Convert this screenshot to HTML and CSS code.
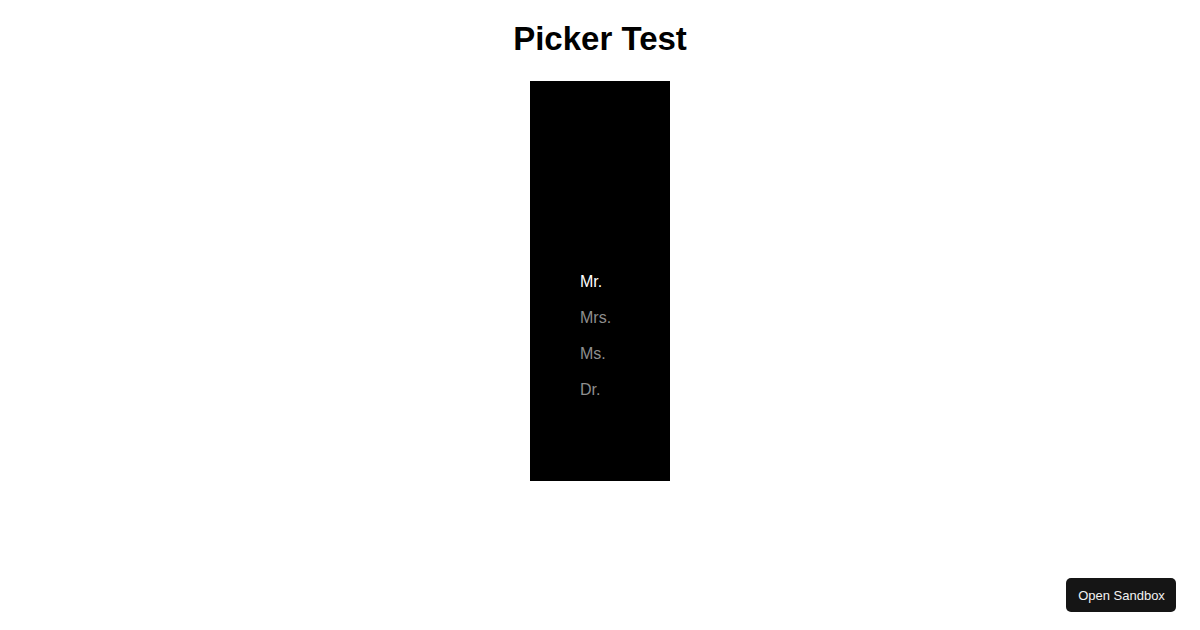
FILE: index.html
```html
<!DOCTYPE html>
<html>
<head>
<meta charset="utf-8">
<title>Picker Test</title>
<link rel="stylesheet" href="styles.css">
</head>
<body>
<h1 class="title">Picker Test</h1>
<div class="picker">
  <ul class="picker-list">
    <li class="picker-item selected">Mr.</li>
    <li class="picker-item">Mrs.</li>
    <li class="picker-item">Ms.</li>
    <li class="picker-item">Dr.</li>
  </ul>
</div>
<button class="sandbox-btn">Open Sandbox</button>
</body>
</html>
```
FILE: styles.css
```css
html, body {
  background: #fff;
}
body {
  margin: 0;
  padding: 0;
  font-family: "Liberation Sans", Arial, sans-serif;
}
.title {
  font-size: 33px;
  font-weight: bold;
  text-align: center;
  margin: 0;
  padding: 20px 0 23px;
  line-height: 38px;
  color: #000;
}
.picker {
  width: 140px;
  height: 400px;
  margin: 0 auto;
  background: #000;
  overflow: hidden;
}
.picker-list {
  list-style: none;
  margin: 0;
  padding: 183px 0 0 50px;
}
.picker-item {
  height: 36px;
  line-height: 36px;
  font-size: 16px;
  color: #8e8e8e;
}
.picker-item.selected {
  color: #fff;
}
.sandbox-btn {
  position: fixed;
  right: 24px;
  bottom: 18px;
  width: 110px;
  height: 34px;
  padding: 0 0 0 1px;
  border: none;
  border-radius: 5px;
  background: #151515;
  color: #f2f2f2;
  font-family: "Liberation Sans", Arial, sans-serif;
  font-size: 13px;
}
```
